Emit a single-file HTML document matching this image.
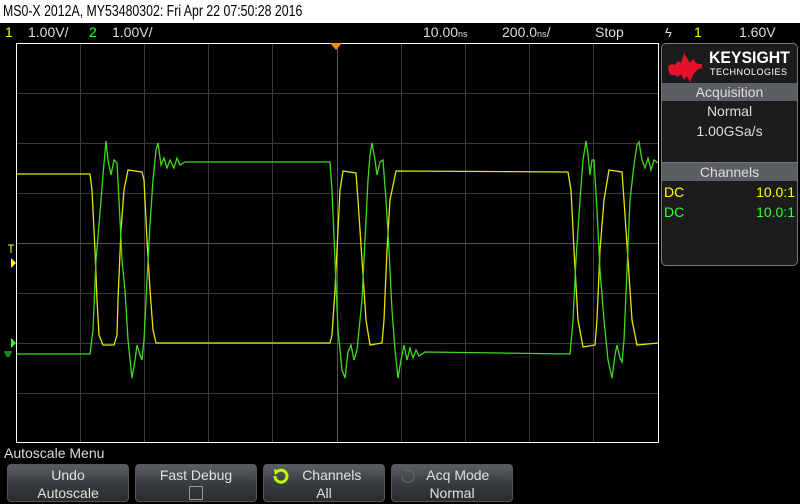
<!DOCTYPE html><html><head><style>
*{margin:0;padding:0;box-sizing:border-box}
body{width:800px;height:503px;background:#000;position:relative;overflow:hidden;font-family:"Liberation Sans",sans-serif;color:#ddd}
.a{position:absolute;white-space:nowrap}
.btn{position:absolute;top:464px;height:38px;border:1px solid #555;border-radius:4px;background:linear-gradient(#5a5e62,#3a3d40 50%,#2a2c2e);color:#e0e0e0;font-size:14px;text-align:center;line-height:18px;padding-top:1px}
.ph{position:absolute;left:662px;width:135px;height:18px;background:#5a5e62;color:#ddd;font-size:14px;text-align:center;line-height:18px}
</style></head><body>
<div class="a" style="left:0;top:0;width:800px;height:23px;background:#fff"></div>
<div class="a" style="left:3px;top:0;color:#000;font-size:16px;line-height:23px;transform:scaleX(0.77);transform-origin:0 0">MS0-X 2012A, MY53480302: Fri Apr 22 07:50:28 2016</div>
<div class="a" style="top:23px;left:5px;font-size:14px;line-height:19px;color:#ff0">1</div>
<div class="a" style="top:23px;left:28px;font-size:14px;line-height:19px">1.00V/</div>
<div class="a" style="top:23px;left:89px;font-size:14px;line-height:19px;color:#3f3">2</div>
<div class="a" style="top:23px;left:112px;font-size:14px;line-height:19px">1.00V/</div>
<div class="a" style="top:23px;left:423px;font-size:14px;line-height:19px">10.00<span style="font-size:9px">ns</span></div>
<div class="a" style="top:23px;left:502px;font-size:14px;line-height:19px">200.0<span style="font-size:9px">ns</span>/</div>
<div class="a" style="top:23px;left:595px;font-size:14px;line-height:19px">Stop</div>
<div class="a" style="top:23px;left:665px;font-size:13px;line-height:19px">ϟ</div>
<div class="a" style="top:23px;left:694px;font-size:14px;line-height:19px;color:#ff0">1</div>
<div class="a" style="top:23px;left:739px;font-size:14px;line-height:19px">1.60V</div>

<svg class="a" style="left:0;top:0" width="800" height="503">
<g stroke="#3a3a3a" stroke-width="1">
<path d="M80.5 44V443M144.5 44V443M208.5 44V443M272.5 44V443M401.5 44V443M465.5 44V443M529.5 44V443M593.5 44V443"/>
<path d="M16 93.5H658M16 143.5H658M16 193.5H658M16 293.5H658M16 343.5H658M16 393.5H658"/>
</g>
<g stroke="#555"><path d="M337.5 44V443M16 243.5H658"/></g>
<path d="M16.5 43V443M16 43.5H658M16 442.5H658M658.5 43V443" stroke="#fff" fill="none"/>
<path d="M330 43h12l-6 7z" fill="#f80"/>
<path d="M8 245h6M11 245v8" stroke="#ff0"/><path d="M11 258l5 5-5 5z" fill="#ff0"/>
<path d="M11 338l5 5-5 5z" fill="#3f3"/><path d="M4 352h8M5 354h6M6 356h4" stroke="#3f3"/>
<polyline fill="none" stroke="#e6e600" stroke-width="1.3" points="17,174 90,174 92,190 95,250 97,300 99,335 103,345 114,345 117,335 118,300 121,230 124,190 128,170 142,172 144,180 147,240 150,290 153,330 156,343 330,343 332,335 335,290 338,230 340,190 343,171 356,173 358,200 362,260 366,320 370,345 382,343 384,320 387,250 390,200 396,171 568,172 571,190 574,250 578,320 583,347 595,345 597,320 600,250 604,200 609,170 622,172 624,200 628,260 632,320 637,345 658,343"/>
<polyline fill="none" stroke="#3ddc1a" stroke-width="1.3" points="17,354 90,354 93,330 96,260 99,225 103,175 106,141 108,160 111,175 114,160 117,163 119,200 122,260 125,290 128,340 132,378 135,360 137,345 140,355 142,360 144,340 147,280 150,225 153,180 156,150 158,143 161,165 164,158 167,168 170,160 174,168 177,158 180,165 185,162 330,162 332,190 335,260 338,330 342,370 345,378 348,352 351,345 354,360 357,350 362,300 365,240 368,180 370,155 372,143 375,160 377,175 380,162 383,160 386,200 389,250 392,310 395,350 398,378 401,360 404,345 407,360 410,348 413,358 416,350 419,356 425,352 570,354 573,320 576,260 580,200 583,160 586,141 588,155 590,175 592,160 594,160 597,210 600,270 604,320 608,360 612,378 615,355 617,345 620,358 622,362 624,340 627,270 630,200 634,165 637,145 639,142 642,160 645,168 648,158 651,170 654,160 658,163"/>
</svg>

<div class="a" style="left:661px;top:43px;width:137px;height:223px;border:1px solid #777;border-radius:5px;background:#1c1c1c"></div>
<svg class="a" style="left:667px;top:48px" width="40" height="34"><path d="M1 18l4-2 3 1 3-4 3 2 3-10 3 5 3 5 3-4 3 4 3 1 3 0v4l-3 1-3 2-3 4-3 7-3-6-3 4-3-6-3 3-3-2-4 0-2-2z" fill="#e8102a"/></svg>
<div class="a" style="left:709px;top:48px;font-size:17px;font-weight:bold;color:#fff;transform:scaleX(0.93);transform-origin:0 0">KEYSIGHT</div>
<div class="a" style="left:710px;top:67px;font-size:9px;color:#fff;letter-spacing:0.5px">TECHNOLOGIES</div>
<div class="ph" style="top:83px">Acquisition</div>
<div class="a" style="left:662px;top:103px;width:135px;text-align:center;font-size:14px">Normal</div>
<div class="a" style="left:662px;top:123px;width:135px;text-align:center;font-size:14px">1.00GSa/s</div>
<div class="a" style="left:661px;top:162px;width:137px;border-top:1px solid #777"></div>
<div class="ph" style="top:163px">Channels</div>
<div class="a" style="left:664px;top:184px;font-size:14px;color:#ff0">DC</div>
<div class="a" style="left:700px;width:95px;text-align:right;top:184px;font-size:14px;color:#ff0">10.0:1</div>
<div class="a" style="left:664px;top:204px;font-size:14px;color:#3f3">DC</div>
<div class="a" style="left:700px;width:95px;text-align:right;top:204px;font-size:14px;color:#3f3">10.0:1</div>

<div class="a" style="left:4px;top:444px;font-size:14px;line-height:18px">Autoscale Menu</div>
<div class="btn" style="left:7px;width:122px">Undo<br>Autoscale</div>
<div class="btn" style="left:135px;width:122px">Fast Debug<br><span style="display:inline-block;width:14px;height:14px;border:1px solid #999;margin-top:2px"></span></div>
<div class="btn" style="left:263px;width:122px">&nbsp;&nbsp;&nbsp;&nbsp;Channels<br>All</div>
<div class="btn" style="left:391px;width:122px">&nbsp;&nbsp;&nbsp;Acq Mode<br>Normal</div>
<svg class="a" style="left:270px;top:466px" width="20" height="20"><path d="M5 10a6 6 0 1 0 3-5" stroke="#bf0" stroke-width="3" fill="none"/><path d="M4 3l6 2-5 4z" fill="#bf0"/></svg>
<svg class="a" style="left:397px;top:466px" width="20" height="20"><path d="M5 10a6 6 0 1 0 3-5" stroke="#666" stroke-width="1.2" fill="none"/></svg>
</body></html>
